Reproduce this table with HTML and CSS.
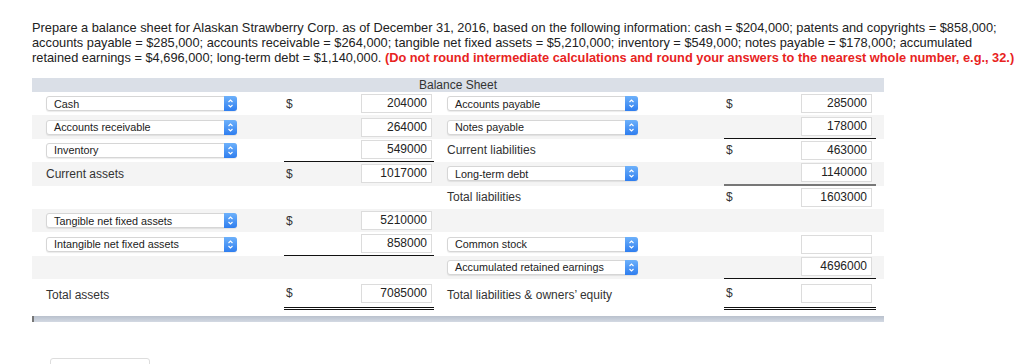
FILE: index.html
```html
<!DOCTYPE html>
<html lang="en">
<head>
<meta charset="utf-8">
<title>Balance Sheet</title>
<link rel="stylesheet" href="styles.css">
</head>
<body>
<div class="page">
  <p class="question">Prepare a balance sheet for Alaskan Strawberry Corp. as of December 31, 2016, based on the following information: cash = $204,000; patents and copyrights = $858,000;<br>accounts payable = $285,000; accounts receivable = $264,000; tangible net fixed assets = $5,210,000; inventory = $549,000; notes payable = $178,000; accumulated<br>retained earnings = $4,696,000; long-term debt = $1,140,000. <strong class="note">(Do not round intermediate calculations and round your answers to the nearest whole number, e.g., 32.)</strong></p>

  <div class="sheet">
    <div class="sheet-head">Balance Sheet</div>

    <div class="row">
      <div class="c-label"><span class="select">Cash<i class="stepper"><svg viewBox="0 0 13 15" width="13" height="15"><path d="M4.5 6 L6.5 4 L8.5 6 M4.5 9 L6.5 11 L8.5 9" fill="none" stroke="#fff" stroke-width="1.1"/></svg></i></span></div>
      <div class="c-cur">$</div>
      <div class="c-amt"><span class="field">204000</span></div>
      <div class="c-label r"><span class="select">Accounts payable<i class="stepper"><svg viewBox="0 0 13 15" width="13" height="15"><path d="M4.5 6 L6.5 4 L8.5 6 M4.5 9 L6.5 11 L8.5 9" fill="none" stroke="#fff" stroke-width="1.1"/></svg></i></span></div>
      <div class="c-cur">$</div>
      <div class="c-amt"><span class="field">285000</span></div>
      <div class="c-end"></div>
    </div>

    <div class="row alt">
      <div class="c-label"><span class="select">Accounts receivable<i class="stepper"><svg viewBox="0 0 13 15" width="13" height="15"><path d="M4.5 6 L6.5 4 L8.5 6 M4.5 9 L6.5 11 L8.5 9" fill="none" stroke="#fff" stroke-width="1.1"/></svg></i></span></div>
      <div class="c-cur"></div>
      <div class="c-amt"><span class="field">264000</span></div>
      <div class="c-label r"><span class="select">Notes payable<i class="stepper"><svg viewBox="0 0 13 15" width="13" height="15"><path d="M4.5 6 L6.5 4 L8.5 6 M4.5 9 L6.5 11 L8.5 9" fill="none" stroke="#fff" stroke-width="1.1"/></svg></i></span></div>
      <div class="c-cur ul"></div>
      <div class="c-amt ul"><span class="field">178000</span></div>
      <div class="c-end"></div>
    </div>

    <div class="row">
      <div class="c-label"><span class="select">Inventory<i class="stepper"><svg viewBox="0 0 13 15" width="13" height="15"><path d="M4.5 6 L6.5 4 L8.5 6 M4.5 9 L6.5 11 L8.5 9" fill="none" stroke="#fff" stroke-width="1.1"/></svg></i></span></div>
      <div class="c-cur ul"></div>
      <div class="c-amt ul"><span class="field">549000</span></div>
      <div class="c-label r"><span class="text">Current liabilities</span></div>
      <div class="c-cur">$</div>
      <div class="c-amt"><span class="field">463000</span></div>
      <div class="c-end"></div>
    </div>

    <div class="row alt">
      <div class="c-label"><span class="text">Current assets</span></div>
      <div class="c-cur">$</div>
      <div class="c-amt"><span class="field">1017000</span></div>
      <div class="c-label r"><span class="select">Long-term debt<i class="stepper"><svg viewBox="0 0 13 15" width="13" height="15"><path d="M4.5 6 L6.5 4 L8.5 6 M4.5 9 L6.5 11 L8.5 9" fill="none" stroke="#fff" stroke-width="1.1"/></svg></i></span></div>
      <div class="c-cur ul gray"></div>
      <div class="c-amt ul gray"><span class="field">1140000</span></div>
      <div class="c-end"></div>
    </div>

    <div class="row">
      <div class="c-label"></div>
      <div class="c-cur"></div>
      <div class="c-amt"></div>
      <div class="c-label r"><span class="text">Total liabilities</span></div>
      <div class="c-cur">$</div>
      <div class="c-amt"><span class="field">1603000</span></div>
      <div class="c-end"></div>
    </div>

    <div class="row alt">
      <div class="c-label"><span class="select">Tangible net fixed assets<i class="stepper"><svg viewBox="0 0 13 15" width="13" height="15"><path d="M4.5 6 L6.5 4 L8.5 6 M4.5 9 L6.5 11 L8.5 9" fill="none" stroke="#fff" stroke-width="1.1"/></svg></i></span></div>
      <div class="c-cur">$</div>
      <div class="c-amt"><span class="field">5210000</span></div>
      <div class="c-label r"></div>
      <div class="c-cur"></div>
      <div class="c-amt"></div>
      <div class="c-end"></div>
    </div>

    <div class="row">
      <div class="c-label"><span class="select">Intangible net fixed assets<i class="stepper"><svg viewBox="0 0 13 15" width="13" height="15"><path d="M4.5 6 L6.5 4 L8.5 6 M4.5 9 L6.5 11 L8.5 9" fill="none" stroke="#fff" stroke-width="1.1"/></svg></i></span></div>
      <div class="c-cur ul"></div>
      <div class="c-amt ul"><span class="field">858000</span></div>
      <div class="c-label r"><span class="select">Common stock<i class="stepper"><svg viewBox="0 0 13 15" width="13" height="15"><path d="M4.5 6 L6.5 4 L8.5 6 M4.5 9 L6.5 11 L8.5 9" fill="none" stroke="#fff" stroke-width="1.1"/></svg></i></span></div>
      <div class="c-cur"></div>
      <div class="c-amt"><span class="field"></span></div>
      <div class="c-end"></div>
    </div>

    <div class="row alt">
      <div class="c-label"></div>
      <div class="c-cur"></div>
      <div class="c-amt"></div>
      <div class="c-label r"><span class="select">Accumulated retained earnings<i class="stepper"><svg viewBox="0 0 13 15" width="13" height="15"><path d="M4.5 6 L6.5 4 L8.5 6 M4.5 9 L6.5 11 L8.5 9" fill="none" stroke="#fff" stroke-width="1.1"/></svg></i></span></div>
      <div class="c-cur ul"></div>
      <div class="c-amt ul"><span class="field">4696000</span></div>
      <div class="c-end"></div>
    </div>

    <div class="row total">
      <div class="c-label"><span class="text">Total assets</span></div>
      <div class="c-cur dbl">$</div>
      <div class="c-amt dbl"><span class="field">7085000</span></div>
      <div class="c-label r"><span class="text">Total liabilities &amp; owners’ equity</span></div>
      <div class="c-cur dbl">$</div>
      <div class="c-amt dbl"><span class="field"></span></div>
      <div class="c-end"></div>
    </div>
  </div>

  <div class="bar"></div>
  <div class="stub"></div>
</div>
</body>
</html>
```

FILE: styles.css
```css
html, body {
  margin: 0;
  padding: 0;
  background: #fff;
}

body {
  font-family: "Liberation Sans", Arial, sans-serif;
  color: #222;
  overflow: hidden;
}

.page {
  padding: 20px 0 0 32px;
}

.question {
  margin: 0;
  font-size: 12.8px;
  line-height: 15px;
  color: #222;
  white-space: nowrap;
}

.note {
  color: #e8231e;
  font-weight: bold;
}

.sheet {
  margin-top: 13px;
  width: 852px;
  font-size: 12px;
  color: #333;
}

.sheet-head {
  height: 14px;
  line-height: 15px;
  text-align: center;
  background: #dadfe7;
  color: #333;
  font-size: 12px;
}

.row {
  display: grid;
  grid-template-columns: 252px 74px 76px 290px 74px 78px 8px;
  height: 23.4px;
  background: #fff;
}

.row.alt {
  background: #f4f4f4;
}

.row.total {
  height: 31px;
}

.row > div {
  display: flex;
  align-items: center;
  box-sizing: border-box;
  min-width: 0;
}

.c-label {
  padding-left: 14px;
}

.c-label.r {
  padding-left: 13px;
}

.c-cur {
  padding-left: 2px;
  font-size: 12px;
  color: #333;
}

.c-amt {
  padding-left: 3px;
}

.ul {
  border-bottom: 1px solid #111;
}

.ul.gray {
  border-bottom: 2px solid #777;
}

.dbl {
  border-bottom: 3px double #111;
}

.text {
  font-size: 12px;
  color: #333;
}

.select {
  position: relative;
  display: flex;
  align-items: center;
  box-sizing: border-box;
  width: 191px;
  height: 15px;
  padding-left: 7px;
  font-size: 10.8px;
  color: #222;
  background: #fff;
  border: 1px solid #d6d6d6;
  border-radius: 3px;
  box-shadow: 0 1px 1px rgba(0, 0, 0, 0.08);
  white-space: nowrap;
}

.stepper {
  position: absolute;
  right: -1px;
  top: -1px;
  width: 13px;
  height: 15px;
  border-radius: 0 3px 3px 0;
  background: linear-gradient(#6db1fb, #2f7eef);
  display: block;
}

.stepper svg {
  display: block;
}

.field {
  display: block;
  box-sizing: border-box;
  width: 71px;
  height: 19px;
  line-height: 17px;
  padding-right: 4px;
  text-align: right;
  font-size: 12px;
  color: #222;
  background: #fff;
  border: 1px solid #dcdcdc;
}

.bar {
  margin-top: 6px;
  width: 852px;
  height: 6px;
  background: linear-gradient(#b9c1cd, #d3d9e3);
  border-left: 2px solid #777;
  box-sizing: border-box;
}

.stub {
  margin: 36px 0 0 18px;
  width: 98px;
  height: 20px;
  border: 1px solid #ddd;
  border-radius: 3px 3px 0 0;
  background: #fff;
}
```
